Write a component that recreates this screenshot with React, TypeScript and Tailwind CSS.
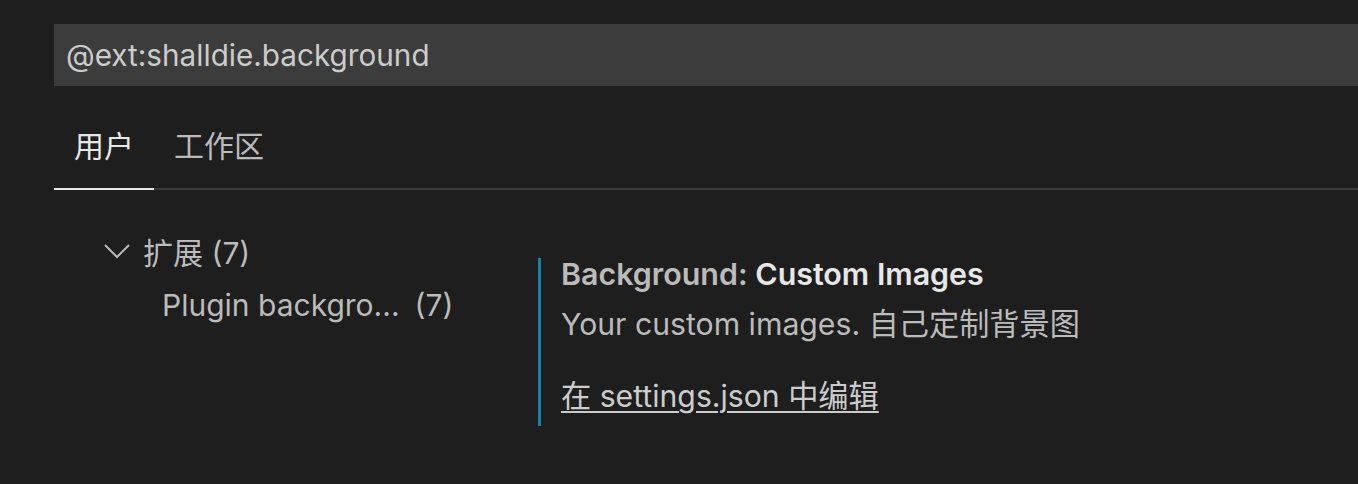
import React from "react";

export default function App() {
  const font = { fontFamily: '"Inter", "Noto Sans CJK SC", sans-serif' };
  return (
    <div className="w-[1358px] h-[484px] bg-[#1e1e1e] text-[#cccccc] overflow-hidden" style={font}>
      <div className="pt-[24px] pl-[54px]">
        <div className="h-[62px] bg-[#3c3c3c] flex items-center pl-[12px] text-[29.7px] text-[#cccccc]">
          @ext:shalldie.background
        </div>
        <div className="flex h-[104px] border-b-2 border-[#3c3c3c]">
          <div className="w-[100px] flex justify-center text-[30px] leading-[40px] text-[#e7e7e7] border-b-2 border-[#e7e7e7] -mb-[2px] pt-[40px]">
            <span>用户</span>
          </div>
          <div className="px-[20px] flex text-[30px] leading-[40px] text-[#bbbbbb] pt-[40px]">
            <span>工作区</span>
          </div>
        </div>
        <div className="flex pt-[37px]">
          <div className="w-[484px] shrink-0 text-[30px]">
            <div className="flex items-center h-[52px] pl-[50px] text-[#bbbbbb]">
              <svg width="26" height="16" viewBox="0 0 26 16" className="mr-[13px] -mt-[4px]">
                <path d="M1 2 L13 14 L25 2" fill="none" stroke="#bbbbbb" strokeWidth="2" />
              </svg>
              <span>扩展 (7)</span>
            </div>
            <div className="flex items-center h-[52px] pl-[108px] text-[#bbbbbb]">
              <span>Plugin backgro...</span>
              <span className="ml-[15px]">(7)</span>
            </div>
          </div>
          <div className="border-l-[3px] border-[#1582a6] pl-[20px] mt-[31px] h-[168px]">
            <div className="text-[30.4px] font-semibold leading-[32px]">
              <span className="text-[#bbbbbb]">Background: </span>
              <span className="text-[#e7e7e7]">Custom Images</span>
            </div>
            <div className="text-[30.2px] text-[#bbbbbb] leading-[36px] mt-[16px]">
              Your custom images. 自己定制背景图
            </div>
            <div className="text-[30.2px] text-[#cccccc] leading-[36px] mt-[36px] underline underline-offset-[4px] decoration-[2px]">
              在 settings.json 中编辑
            </div>
          </div>
        </div>
      </div>
    </div>
  );
}
